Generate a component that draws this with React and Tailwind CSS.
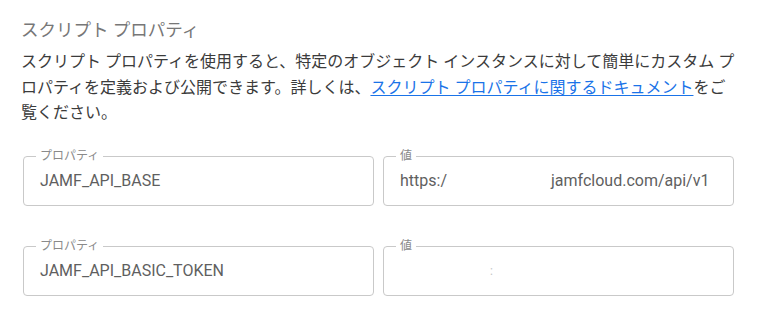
const FONT = 'font-[Roboto,"Noto_Sans_CJK_JP",sans-serif]';

function Field({ label, children }) {
  return (
    <div className="relative h-[50px] rounded-[4px] border border-[#c9c9c9] flex items-center pl-4">
      <span className="absolute left-[12px] -top-[9px] bg-white px-1 text-[12px] leading-[16px] text-[#8a8a8a]">
        {label}
      </span>
      <div className="text-[16px] text-[#5f5f5f] whitespace-nowrap flex items-center">{children}</div>
    </div>
  );
}

export default function App() {
  return (
    <div className={`${FONT} bg-white w-[768px] h-[320px] pl-[21px] pt-[18px]`}>
      <h2 className="text-[17.5px] leading-[24px] text-[#777777]">スクリプト プロパティ</h2>
      <p className="mt-[7px] w-[717px] text-[16px] leading-[25.5px] text-[#3b3b3b]">
        スクリプト プロパティを使用すると、特定のオブジェクト インスタンスに対して簡単にカスタム プロパティを定義および公開できます。詳しくは、
        <a href="#" className="text-[#1a73e8] underline underline-offset-2">
          スクリプト プロパティに関するドキュメント
        </a>
        をご覧ください。
      </p>
      <div className="mt-[30px] ml-[2px] w-[711px] grid grid-cols-2 gap-x-[9px] gap-y-[40px]">
        <Field label="プロパティ">JAMF_API_BASE</Field>
        <Field label="値">
          <span>https:/</span>
          <span className="ml-[104px]">jamfcloud.com/api/v1</span>
        </Field>
        <Field label="プロパティ">JAMF_API_BASIC_TOKEN</Field>
        <Field label="値">
          <span className="ml-[90px] text-[#c4c4c4] text-[12px]">:</span>
        </Field>
      </div>
    </div>
  );
}
